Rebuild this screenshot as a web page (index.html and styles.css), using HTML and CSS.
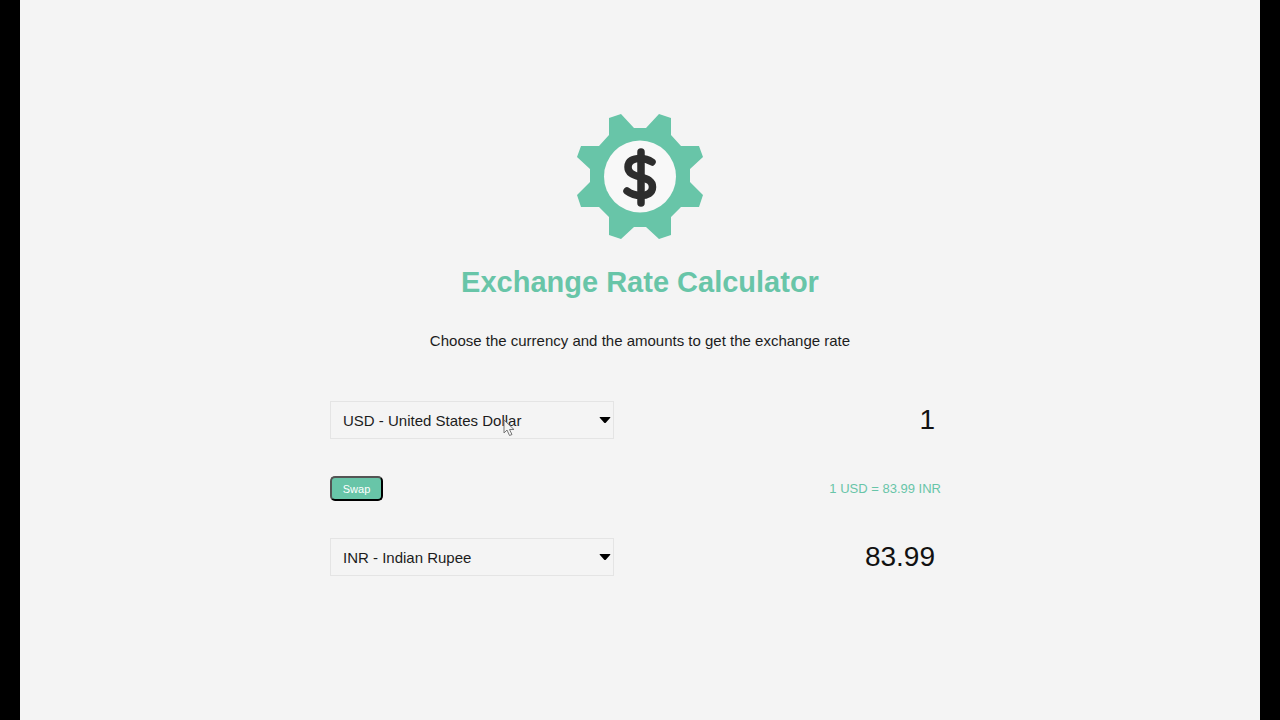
FILE: index.html
```html
<!DOCTYPE html>
<html lang="en">
<head>
    <meta charset="UTF-8">
    <meta name="viewport" content="width=device-width, initial-scale=1.0">
    <title>Exchange Rate Calculator</title>
    <link rel="stylesheet" href="styles.css">
</head>
<body>
    <main class="page">
        <svg class="money-img" viewBox="0 0 150 150" aria-hidden="true">
            <path fill="#68c5a8" d="M44 18L56 14L69 28H81L94 14L106 18V35L116 46H134L138 57L125 69V82L138 95L134 107H116L106 117V135L94 139L81 127H69L56 139L44 135V117L34 107H16L12 95L25 82V69L12 57L16 46H34L44 35Z"/>
            <circle cx="75" cy="76.500" r="36" fill="#f8f8f8"/>
            <g fill="none" stroke="#2d2d2d" stroke-linecap="round">
                <path stroke-width="7.500" d="M76 52V103"/>
                <path stroke-width="7.500" d="M87 62C84 60 80 58.500 75 58.500C68 58.500 63 61 63 67C63 73 68 75 75 77C83 79 87.500 81 87.500 87C87.500 93 82 95.500 76 95.500C70 95.500 66 94 62 91"/>
            </g>
        </svg>
        <h1>Exchange Rate Calculator</h1>
        <p>Choose the currency and the amounts to get the exchange rate</p>

        <div class="container">
            <div class="currency">
                <div class="select-box">
                    <select id="currency-one" aria-label="From currency">
                        <option value="USD" selected>USD - United States Dollar</option>
                        <option value="INR">INR - Indian Rupee</option>
                    </select>
                    <svg class="arrow" viewBox="0 0 12 8" aria-hidden="true"><path d="M1 1H11Q12 1 11 2L7 6.500Q6 7.500 5 6.500L1 2Q0 1 1 1Z"/></svg>
                    <svg class="cursor" viewBox="0 0 12 18" aria-hidden="true"><path d="M1 1V14L4 11L6.500 16.500L9 15.500L6.500 10.500H11Z"/></svg>
                </div>
                <input type="number" id="amount-one" aria-label="Amount to convert" value="1">
            </div>

            <div class="swap-rate-container">
                <button class="btn" id="swap" type="button">Swap</button>
                <div class="rate" id="rate">1 USD = 83.99 INR</div>
            </div>

            <div class="currency">
                <div class="select-box">
                    <select id="currency-two" aria-label="To currency">
                        <option value="USD">USD - United States Dollar</option>
                        <option value="INR" selected>INR - Indian Rupee</option>
                    </select>
                    <svg class="arrow" viewBox="0 0 12 8" aria-hidden="true"><path d="M1 1H11Q12 1 11 2L7 6.500Q6 7.500 5 6.500L1 2Q0 1 1 1Z"/></svg>
                </div>
                <input type="number" id="amount-two" aria-label="Converted amount" value="83.99">
            </div>
        </div>
    </main>
    <script src="script.js"></script>
</body>
</html>
```

FILE: styles.css
```css
:root {
    --primary-color: #68c5a8;
}

* {
    box-sizing: border-box;
}

body {
    margin: 0;
    padding: 0 20px;
    background-color: #000;
    font-family: "Liberation Sans", Arial, Helvetica, sans-serif;
    font-size: 15px;
    color: #1c1c1c;
}

.page {
    min-height: 100vh;
    padding: 0 20px 44px;
    background-color: #f4f4f4;
    display: flex;
    flex-direction: column;
    align-items: center;
    justify-content: center;
}

.money-img {
    width: 150px;
    height: 150px;
}

h1 {
    margin: 14px 0 32px;
    color: var(--primary-color);
    font-size: 29px;
    line-height: 36px;
    text-align: center;
}

p {
    margin: 0 0 51px;
    line-height: 18px;
    text-align: center;
}

.container {
    width: 100%;
    max-width: 620px;
}

.currency,
.swap-rate-container {
    display: flex;
    align-items: center;
    justify-content: space-between;
}

.select-box {
    position: relative;
    width: 284px;
}

.currency select {
    width: 100%;
    height: 38px;
    padding: 0 28px 0 12px;
    appearance: none;
    background: transparent;
    border: 1px solid #e4e4e4;
    border-radius: 0;
    color: #1c1c1c;
    font-family: inherit;
    font-size: 15px;
}

.arrow {
    position: absolute;
    top: 15px;
    right: 3px;
    width: 12px;
    height: 8px;
    pointer-events: none;
}

.cursor {
    position: absolute;
    top: 18px;
    left: 173px;
    width: 12px;
    height: 18px;
    fill: #f4f4f4;
    stroke: #777;
    pointer-events: none;
}

.currency input {
    width: 240px;
    min-width: 0;
    padding: 0 15px 0 0;
    background: transparent;
    border: 0;
    color: #111;
    font-family: inherit;
    font-size: 28px;
    text-align: right;
    appearance: textfield;
}

.currency input::-webkit-inner-spin-button,
.currency input::-webkit-outer-spin-button {
    appearance: none;
    margin: 0;
}

.swap-rate-container {
    margin: 37px 0;
}

.btn {
    width: 53px;
    height: 25px;
    padding: 0;
    background-color: var(--primary-color);
    border: 2px outset #000;
    border-radius: 5px;
    color: #fff;
    cursor: pointer;
    font-family: inherit;
    font-size: 11px;
}

.rate {
    padding-right: 9px;
    color: var(--primary-color);
    font-size: 13px;
}

@media (max-width: 600px) {
    .select-box {
        width: 60%;
    }

    .currency input {
        width: 35%;
    }
}
```

FILE: script.js
```js
const currencyOne = document.getElementById('currency-one');
const currencyTwo = document.getElementById('currency-two');
const amountOne = document.getElementById('amount-one');
const amountTwo = document.getElementById('amount-two');
const rateText = document.getElementById('rate');

const rates = { USD: 1, INR: 83.99 };

function calculate() {
    const rate = rates[currencyTwo.value] / rates[currencyOne.value];
    const shown = rate < 1 ? rate.toFixed(4) : rate.toFixed(2);
    rateText.innerText = `1 ${currencyOne.value} = ${shown} ${currencyTwo.value}`;
    amountTwo.value = (amountOne.value * rate).toFixed(2);
}

currencyOne.addEventListener('change', calculate);
currencyTwo.addEventListener('change', calculate);
amountOne.addEventListener('input', calculate);

document.getElementById('swap').addEventListener('click', () => {
    const temp = currencyOne.value;
    currencyOne.value = currencyTwo.value;
    currencyTwo.value = temp;
    calculate();
});
```
